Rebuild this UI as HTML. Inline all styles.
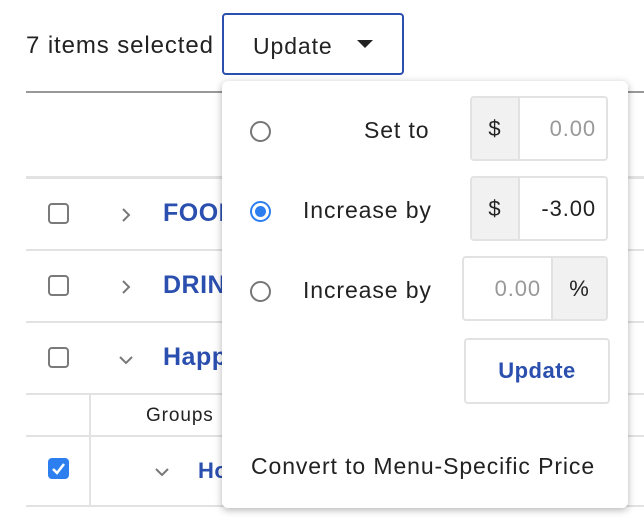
<!DOCTYPE html>
<html><head><style>
*{margin:0;padding:0;box-sizing:border-box}
body{width:644px;height:524px;overflow:hidden;background:#fff;font-family:"Liberation Sans",sans-serif;color:#222;position:relative;letter-spacing:0.9px}
.a{position:absolute}
.hl{position:absolute;left:26px;right:0;background:#e2e2e2;height:2px}
.cb{position:absolute;left:48px;width:21px;height:21px;border:2px solid #7a7a7a;border-radius:4px}
.nm{position:absolute;left:163px;font-weight:bold;color:#2b4fae;font-size:25px;letter-spacing:0.5px}
.radio{position:absolute;left:250px;width:21px;height:21px;border:2px solid #777;border-radius:50%}
.lbl{position:absolute;font-size:23px;color:#222;line-height:26px}
.inp{position:absolute;border:2px solid #e2e2e2;border-radius:4px;height:65px;display:flex;overflow:hidden;font-size:22px}
.ad{background:#f1f1f1;display:flex;align-items:center;justify-content:center}
.v{flex:1;display:flex;align-items:center;justify-content:flex-end;padding-right:10px}
</style></head><body>
<div class="a" style="left:26px;top:33px;font-size:24px;line-height:26px">7 items selected</div>
<div class="a" style="left:222px;top:13px;width:182px;height:62px;border:2px solid #2b4fae;border-radius:4px"></div>
<div class="a" style="left:253px;top:33px;font-size:23px;line-height:26px">Update</div>
<svg class="a" style="left:357px;top:40px" width="16" height="9"><path d="M0 0H16L8 8Z" fill="#222"/></svg>

<div class="a" style="left:26px;right:0;top:91px;height:2px;background:#999"></div>
<div class="hl" style="top:176px;height:3px"></div>
<div class="hl" style="top:249px"></div>
<div class="hl" style="top:321px"></div>
<div class="hl" style="top:393px"></div>
<div class="hl" style="top:435px"></div>
<div class="hl" style="top:505px"></div>
<div class="a" style="left:89px;top:394px;width:2px;height:112px;background:#e2e2e2"></div>

<div class="cb" style="top:203px"></div>
<div class="cb" style="top:275px"></div>
<div class="cb" style="top:347px"></div>
<div class="a" style="left:48px;top:458px;width:21px;height:21px;background:#2d7ff0;border-radius:4px"><svg width="21" height="21"><path d="M5 11l4 4 7-9" stroke="#fff" stroke-width="2.5" fill="none"/></svg></div>
<svg class="a" style="left:121px;top:208px" width="10" height="14"><path d="M2 1l6 6-6 6" stroke="#777" stroke-width="2" fill="none"/></svg>
<svg class="a" style="left:121px;top:280px" width="10" height="14"><path d="M2 1l6 6-6 6" stroke="#777" stroke-width="2" fill="none"/></svg>
<svg class="a" style="left:119px;top:355px" width="14" height="10"><path d="M1 2l6 6 6-6" stroke="#777" stroke-width="2" fill="none"/></svg>
<svg class="a" style="left:155px;top:467px" width="14" height="10"><path d="M1 2l6 6 6-6" stroke="#777" stroke-width="2" fill="none"/></svg>
<div class="nm" style="top:199px">FOOD</div>
<div class="nm" style="top:271px">DRINKS</div>
<div class="nm" style="top:343px">Happy</div>
<div class="a" style="left:146px;top:405px;font-size:19px">Groups</div>
<div class="nm" style="left:198px;top:458px;font-size:22px">Ho</div>

<div class="a" style="left:222px;top:81px;width:406px;height:427px;background:#fff;border-radius:6px;box-shadow:0 2px 8px rgba(0,0,0,.3)"></div>
<div class="radio" style="top:121px"></div>
<div class="a" style="left:250px;top:201px;width:21px;height:21px;border:2px solid #2d7ff0;border-radius:50%"><div style="position:absolute;left:3px;top:3px;width:11px;height:11px;background:#2d7ff0;border-radius:50%"></div></div>
<div class="radio" style="top:281px"></div>
<div class="lbl" style="left:364px;top:117px">Set to</div>
<div class="lbl" style="left:303px;top:197px">Increase by</div>
<div class="lbl" style="left:303px;top:277px">Increase by</div>
<div class="inp" style="left:470px;top:96px;width:138px"><div class="ad" style="width:48px;border-right:2px solid #e2e2e2">$</div><div class="v" style="color:#999">0.00</div></div>
<div class="inp" style="left:470px;top:176px;width:138px"><div class="ad" style="width:48px;border-right:2px solid #e2e2e2">$</div><div class="v">-3.00</div></div>
<div class="inp" style="left:462px;top:256px;width:146px"><div class="v" style="color:#999">0.00</div><div class="ad" style="width:55px;border-left:2px solid #e2e2e2">%</div></div>
<div class="a" style="left:464px;top:338px;width:146px;height:66px;border:2px solid #e2e2e2;border-radius:4px;display:flex;align-items:center;justify-content:center;color:#2b4fae;font-weight:bold;font-size:22px;letter-spacing:0.5px">Update</div>
<div class="lbl" style="left:251px;top:453px">Convert to Menu-Specific Price</div>
</body></html>
